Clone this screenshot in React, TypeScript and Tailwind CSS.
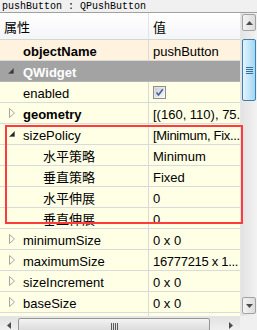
import React from "react";

type Row = {
  label: string;
  value?: string;
  bold?: boolean;
  indent?: boolean;
  arrow?: "open" | "closed";
  check?: boolean;
  group?: boolean;
  peach?: boolean;
  tight?: boolean;
};

const rows: Row[] = [
  { label: "objectName", value: "pushButton", bold: true, peach: true },
  { label: "QWidget", group: true },
  { label: "enabled", check: true },
  { label: "geometry", value: "[(160, 110), 75.", bold: true, arrow: "closed" },
  { label: "sizePolicy", value: "[Minimum, Fix...", arrow: "open", tight: true },
  { label: "水平策略", value: "Minimum", indent: true },
  { label: "垂直策略", value: "Fixed", indent: true },
  { label: "水平伸展", value: "0", indent: true },
  { label: "垂直伸展", value: "0", indent: true },
  { label: "minimumSize", value: "0 x 0", arrow: "closed" },
  { label: "maximumSize", value: "16777215 x 1...", arrow: "closed", tight: true },
  { label: "sizeIncrement", value: "0 x 0", arrow: "closed" },
  { label: "baseSize", value: "0 x 0", arrow: "closed" },
  { label: "", value: "" },
];

function Arrow({ kind, light }: { kind: "open" | "closed"; light?: boolean }) {
  if (kind === "open") {
    return (
      <svg width="6" height="6" viewBox="0 0 6 6" className="shrink-0">
        <polygon points="5.5,0.5 5.5,5.5 0.5,5.5" fill={light ? "#3a3a3a" : "#262626"} stroke="#595959" strokeWidth="0.6" />
      </svg>
    );
  }
  return (
    <svg width="6" height="10" viewBox="0 0 6 10" className="shrink-0">
      <polygon points="0.5,0.5 5.5,5 0.5,9.5" fill="none" stroke="#a6a6a6" strokeWidth="1" />
    </svg>
  );
}

function Checkbox() {
  return (
    <div className="w-[13px] h-[13px] border border-[#8e8f8f] bg-linear-to-br from-[#dcdcdc] to-[#fbfbfb] flex items-center justify-center">
      <div className="w-[9px] h-[9px] bg-linear-to-br from-[#cbcfd5] to-[#f6f6f6] flex items-center justify-center">
        <svg width="9" height="9" viewBox="0 0 9 9">
          <path d="M1.5 4.5 L3.5 7 L7.8 1.2" fill="none" stroke="#4a5f97" strokeWidth="1.6" />
        </svg>
      </div>
    </div>
  );
}

function PropRow({ r }: { r: Row }) {
  if (r.group) {
    return (
      <div className="h-[21px] shrink-0 flex items-center bg-[#a3a3a3] border-b border-[#b5b5b5]">
        <div className="w-[23px] pl-[8px] flex items-center">
          <Arrow kind="open" light />
        </div>
        <span className="text-white font-bold pt-[3px]">{r.label}</span>
      </div>
    );
  }
  return (
    <div
      className={
        "h-[21px] shrink-0 flex border-b border-[#dadada] " +
        (r.peach ? "bg-[#fff2de]" : "bg-[#ffffe6]")
      }
    >
      <div className="w-[149px] shrink-0 flex items-center border-r border-[#dadada]">
        <div className={"flex items-center shrink-0 pl-[9px] " + (r.indent ? "w-[43px]" : "w-[23px]")}>
          {r.arrow && <Arrow kind={r.arrow} />}
        </div>
        <span className={"whitespace-nowrap pt-[3px] " + (r.bold ? "font-bold" : "")}>{r.label}</span>
      </div>
      <div className="flex-1 min-w-0 flex items-center pl-[4px] overflow-hidden">
        {r.check ? (
          <Checkbox />
        ) : (
          <span className={"whitespace-nowrap pt-[3px] " + (r.tight ? "tracking-[-0.3px]" : "")}>{r.value}</span>
        )}
      </div>
    </div>
  );
}

function VScroll() {
  return (
    <div className="w-[17px] shrink-0 flex flex-col bg-linear-to-r from-[#e3e3e3] to-[#f2f2f2] border-l border-[#e6e6e6] py-[1px]">
      <div className="h-[17px] mx-[1px] rounded-[2px] border border-[#a2a2a2] bg-linear-to-r from-[#f4f4f4] to-[#dcdcdc] flex items-center justify-center">
        <svg width="7" height="4" viewBox="0 0 7 4">
          <polygon points="3.5,0 7,4 0,4" fill="#4d4d4d" />
        </svg>
      </div>
      <div className="h-[8px]" />
      <div className="h-[62px] mx-[1px] rounded-[2px] border border-[#3c7fb1] bg-linear-to-r from-[#e3f4fc] via-[#c4e6f8] to-[#a2d7f4] flex flex-col items-center justify-center gap-[1px]">
        <div className="w-[7px] h-[1px] bg-[#3a6f99]" />
        <div className="w-[7px] h-[1px] bg-[#3a6f99]" />
        <div className="w-[7px] h-[1px] bg-[#3a6f99]" />
        <div className="w-[7px] h-[1px] bg-[#3a6f99]" />
      </div>
      <div className="flex-1" />
      <div className="h-[17px] mx-[1px] mb-[1px] rounded-[2px] border border-[#a2a2a2] bg-linear-to-r from-[#f4f4f4] to-[#dcdcdc] flex items-center justify-center">
        <svg width="7" height="4" viewBox="0 0 7 4">
          <polygon points="0,0 7,0 3.5,4" fill="#4d4d4d" />
        </svg>
      </div>
    </div>
  );
}

function HScroll() {
  return (
    <div className="h-[17px] shrink-0 flex">
      <div className="flex-1 flex items-start pt-[1px] bg-linear-to-b from-[#e3e3e3] to-[#f2f2f2] border-t border-[#e6e6e6]">
        <div className="w-[18px] h-[14px] flex items-center justify-center">
          <svg width="4" height="7" viewBox="0 0 4 7">
            <polygon points="4,0 4,7 0,3.5" fill="#4d4d4d" />
          </svg>
        </div>
        <div className="w-[192px] h-[16px] rounded-[2px] border border-[#979797] bg-linear-to-b from-[#f3f3f3] to-[#d6d6d6] flex items-center justify-center gap-[1px]">
          <div className="w-[1px] h-[7px] bg-[#5a5a5a]" />
          <div className="w-[1px] h-[7px] bg-[#5a5a5a]" />
          <div className="w-[1px] h-[7px] bg-[#5a5a5a]" />
          <div className="w-[1px] h-[7px] bg-[#5a5a5a]" />
        </div>
        <div className="flex-1" />
        <div className="w-[18px] h-[14px] flex items-center justify-center">
          <svg width="4" height="7" viewBox="0 0 4 7">
            <polygon points="0,0 4,3.5 0,7" fill="#4d4d4d" />
          </svg>
        </div>
      </div>
      <div className="w-[17px] bg-[#f0f0f0]" />
    </div>
  );
}

export default function App() {
  return (
    <div
      className="relative w-[257px] h-[330px] overflow-hidden bg-white flex flex-col text-[13px] text-black"
      style={{ fontFamily: '"Liberation Sans", "Noto Sans CJK SC", sans-serif' }}
    >
      <div className="h-[13px] shrink-0 bg-[#f0f0f0] border-b border-[#a0a0a0] flex items-center pl-[2px]">
        <span className="text-[10px] leading-none pt-[1px]" style={{ fontFamily: '"Liberation Mono", monospace' }}>
          pushButton : QPushButton
        </span>
      </div>
      <div className="h-[303px] shrink-0 flex">
        <div className="flex-1 min-w-0 flex flex-col overflow-hidden">
          <div className="h-[27px] shrink-0 flex bg-linear-to-b from-white to-[#f4f5f7] border-b border-[#d5d5d5]">
            <div className="w-[149px] shrink-0 flex items-center pl-[4px] pt-[3px] border-r border-[#e3e4e6]">属性</div>
            <div className="flex-1 flex items-center pl-[4px] pt-[3px]">值</div>
          </div>
          {rows.map((r, i) => (
            <PropRow key={i} r={r} />
          ))}
        </div>
        <VScroll />
      </div>
      <HScroll />
      <div className="absolute left-[5px] top-[125px] w-[238px] h-[99px] border-2 border-[#ff3b3b]" />
    </div>
  );
}
